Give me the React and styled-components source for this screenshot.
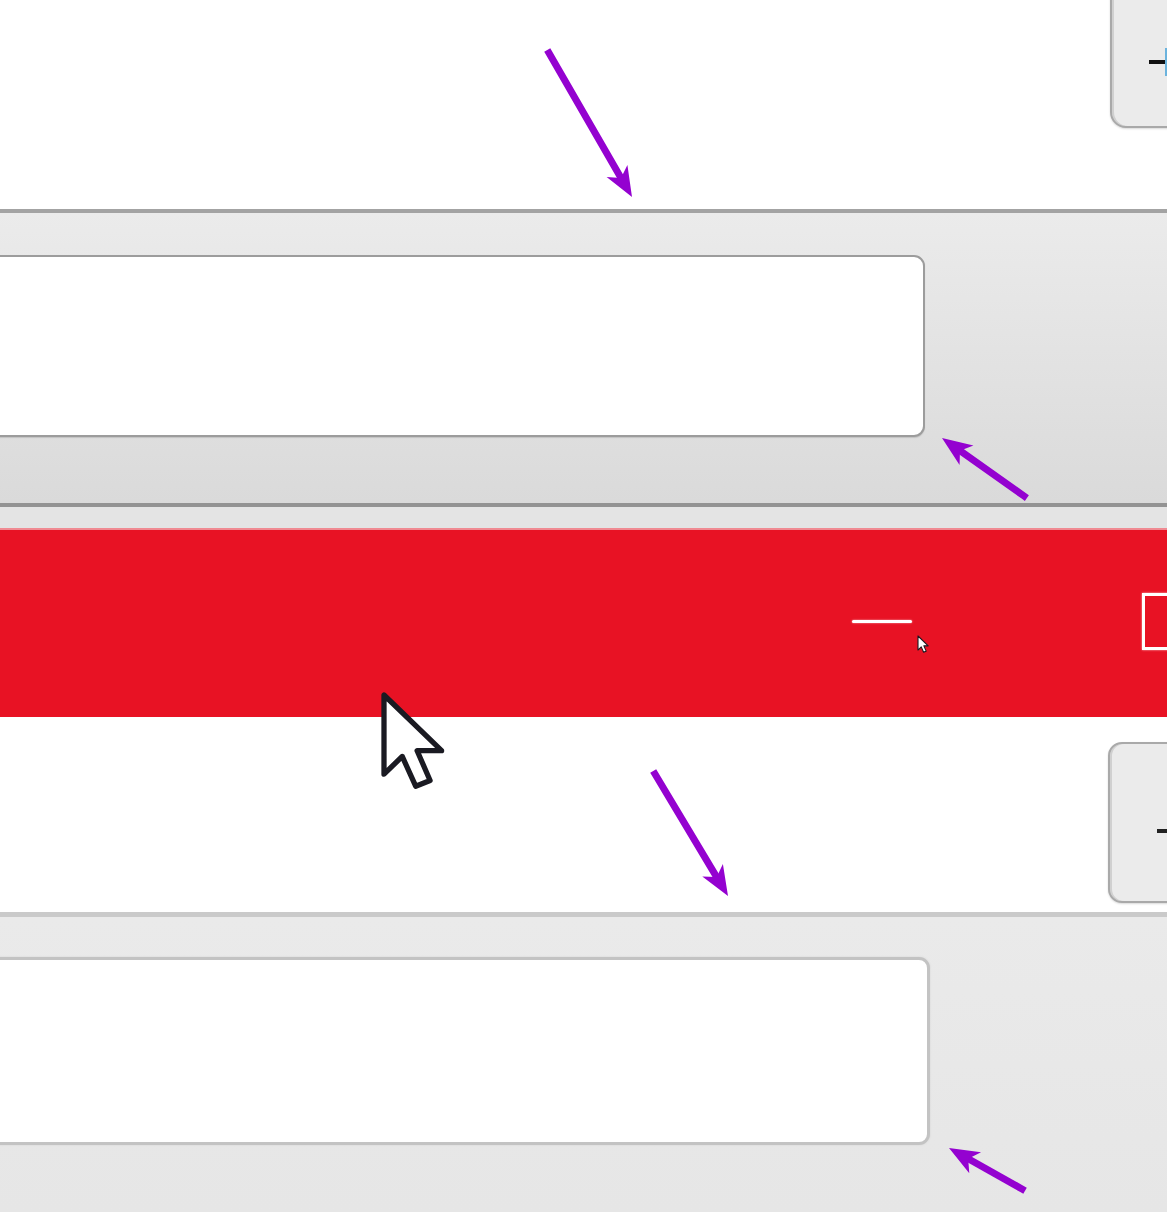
import React from "react";
import styled, { createGlobalStyle } from "styled-components";

const Global = createGlobalStyle`
  html, body { margin: 0; padding: 0; background: #fff; }
  body { font-family: "Liberation Sans", Arial, sans-serif; }
`;

const Page = styled.div`
  position: relative;
  width: 1167px;
  height: 1212px;
  overflow: hidden;
  background: #fff;
`;

const Canvas = styled.div`
  display: flex;
  justify-content: flex-end;
  align-items: flex-start;
  height: ${(p) => p.$h}px;
  background: #fff;
  padding-top: ${(p) => p.$top}px;
  box-sizing: border-box;
`;

const SideButton = styled.div`
  display: flex;
  align-items: center;
  justify-content: flex-end;
  flex-shrink: 0;
  width: ${(p) => p.$w}px;
  height: ${(p) => p.$h}px;
  margin-top: ${(p) => p.$mt || 0}px;
  margin-right: -24px;
  padding-right: 24px;
  box-sizing: border-box;
  background: #ebebeb;
  border: 2px solid #a9a9a9;
  border-radius: ${(p) => p.$radius};
  box-shadow: inset 2px 0 0 #d0d0d0, 0 1px 2px rgba(0, 0, 0, 0.15);
`;

const Toolbar = styled.div`
  height: ${(p) => p.$h}px;
  box-sizing: border-box;
  padding-top: ${(p) => p.$pt}px;
  border-top: ${(p) => (p.$soft ? "5px solid #cacaca" : "4px solid #a3a3a3")};
  border-bottom: ${(p) => (p.$soft ? "none" : "4px solid #939393")};
  background: ${(p) =>
    p.$soft
      ? "linear-gradient(#eaeaea, #e6e6e6)"
      : "linear-gradient(#ebebeb, #dadada)"};
`;

const InputBox = styled.div`
  width: ${(p) => p.$w}px;
  height: ${(p) => p.$h}px;
  margin-left: -20px;
  box-sizing: border-box;
  background: #fff;
  border: ${(p) => (p.$soft ? "3px solid #c3c3c3" : "2px solid #9c9c9c")};
  border-radius: 11px;
  box-shadow: ${(p) => (p.$soft ? "0 0 2px #d0d0d0" : "0 1px 1px #c2c2c2")};
`;

const Strip = styled.div`
  height: 21px;
  background: #e4e4e4;
  border-bottom: 2px solid #f08a92;
`;

const TitleBar = styled.div`
  display: flex;
  align-items: center;
  height: 187px;
  background: #e81224;
  padding-left: 852px;
  box-sizing: border-box;
  overflow: hidden;
`;

const Minimize = styled.div`
  flex-shrink: 0;
  width: 60px;
  height: 3px;
  margin-top: -4px;
  background: #fff;
  border-radius: 2px;
  box-shadow: 0 0 2px rgba(255, 255, 255, 0.7);
`;

const Maximize = styled.div`
  flex-shrink: 0;
  width: 56px;
  height: 57px;
  margin-left: 230px;
  margin-top: -4px;
  box-sizing: border-box;
  border: 3px solid #fff;
  box-shadow: 0 0 2px rgba(255, 255, 255, 0.7);
`;

const Overlay = styled.svg`
  position: absolute;
  left: 0;
  top: 0;
  pointer-events: none;
`;

const PURPLE = "#9402d0";

function Arrow({ from, to }) {
  const [x1, y1] = from;
  const [x2, y2] = to;
  const dx = x2 - x1;
  const dy = y2 - y1;
  const len = Math.hypot(dx, dy);
  const ux = dx / len;
  const uy = dy / len;
  const headLen = 30;
  const half = 12;
  const bx = x2 - ux * headLen;
  const by = y2 - uy * headLen;
  const inner = x2 - ux * (headLen - 8);
  const innerY = y2 - uy * (headLen - 8);
  const pts = [
    [x2, y2],
    [bx - uy * half, by + ux * half],
    [inner, innerY],
    [bx + uy * half, by - ux * half],
  ]
    .map((p) => p.join(","))
    .join(" ");
  return (
    <g>
      <line
        x1={x1}
        y1={y1}
        x2={inner}
        y2={innerY}
        stroke={PURPLE}
        strokeWidth="7"
        strokeLinecap="square"
      />
      <polygon points={pts} fill={PURPLE} />
    </g>
  );
}

function Cursor({ x, y, scale, stroke }) {
  return (
    <g transform={`translate(${x} ${y}) scale(${scale})`}>
      <path
        d="M0 0 L0 16.5 L3.8 12.8 L6.6 19 L9.6 17.8 L6.9 11.6 L12 11.6 Z"
        fill="#fff"
        stroke="#1a1a22"
        strokeWidth={stroke}
        strokeLinejoin="round"
      />
    </g>
  );
}

function PlusIcon() {
  return (
    <svg width="24" height="40" viewBox="0 0 24 40" style={{ marginRight: -6 }}>
      <rect x="2" y="18" width="22" height="4" fill="#111" />
      <rect x="18" y="6" width="4" height="28" fill="#6bb3dd" />
    </svg>
  );
}

function DashIcon() {
  return (
    <svg width="10" height="10" viewBox="0 0 10 10" style={{ marginRight: -2, marginTop: 16 }}>
      <rect x="0" y="3" width="10" height="4" fill="#222" />
    </svg>
  );
}

export default function App() {
  return (
    <>
      <Global />
      <Page>
        <Canvas $h={209} $top={0}>
          <SideButton $w={81} $h={132} $mt={-4} $radius="0 0 0 16px">
            <PlusIcon />
          </SideButton>
        </Canvas>
        <Toolbar $h={298} $pt={42}>
          <InputBox $w={945} $h={182} />
        </Toolbar>
        <Strip />
        <TitleBar>
          <Minimize />
          <Maximize />
        </TitleBar>
        <Canvas $h={195} $top={25}>
          <SideButton $w={83} $h={161} $radius="14px">
            <DashIcon />
          </SideButton>
        </Canvas>
        <Toolbar $h={300} $pt={40} $soft>
          <InputBox $w={950} $h={188} $soft />
        </Toolbar>
        <Overlay width="1167" height="1212" viewBox="0 0 1167 1212">
          <Arrow from={[549, 53]} to={[632, 197]} />
          <Arrow from={[1024, 496]} to={[942, 438]} />
          <Arrow from={[655, 774]} to={[728, 896]} />
          <Arrow from={[1022, 1189]} to={[949, 1148]} />
          <Cursor x={384} y={695} scale={4.8} stroke={1.1} />
          <Cursor x={918} y={636} scale={0.85} stroke={1.3} />
        </Overlay>
      </Page>
    </>
  );
}
